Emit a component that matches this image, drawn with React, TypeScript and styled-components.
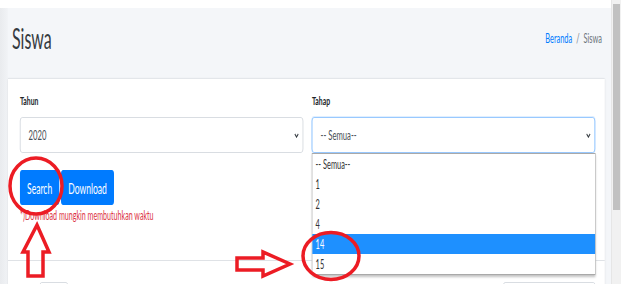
import React from "react";
import styled, { createGlobalStyle } from "styled-components";

// the reference is a squeezed screenshot: the page is laid out at its
// natural width and compressed horizontally by this factor
const SQUEEZE = 0.57;
const w = (refPx: number) => `${(refPx / SQUEEZE).toFixed(1)}px`;

const tahapOptions = ["-- Semua--", "1", "2", "4", "14", "15"];

const GlobalStyle = createGlobalStyle`
  html, body {
    margin: 0;
    padding: 0;
    background: #ffffff;
  }
  body {
    font-family: Lato, "Liberation Sans", sans-serif;
    color: #212529;
  }
`;

const App: React.FC = () => {
  return (
    <Screen>
      <GlobalStyle />
      <Viewport>
        <Frame>
          <TopGap />
          <Body>
            <Shade />
            <Main>
              <ContentHeader>
                <PageTitle>Siswa</PageTitle>
                <Breadcrumb>
                  <Crumb $link>Beranda</Crumb>
                  <Slash>/</Slash>
                  <Crumb>Siswa</Crumb>
                </Breadcrumb>
              </ContentHeader>

              <Card>
                <CardBody>
                  <FormRow>
                    <Field>
                      <Label>Tahun</Label>
                      <SelectBox>
                        <SelectText>2020</SelectText>
                        <Chevron viewBox="0 0 8 5">
                          <path d="M1 1 L4 4 L7 1" />
                        </Chevron>
                      </SelectBox>
                    </Field>
                    <Field>
                      <Label>Tahap</Label>
                      <SelectBox $focused>
                        <SelectText>-- Semua--</SelectText>
                        <Chevron viewBox="0 0 8 5">
                          <path d="M1 1 L4 4 L7 1" />
                        </Chevron>
                        <DropdownList>
                          {tahapOptions.map((opt) => (
                            <OptionItem key={opt} $selected={opt === "14"}>
                              {opt}
                            </OptionItem>
                          ))}
                        </DropdownList>
                      </SelectBox>
                    </Field>
                  </FormRow>

                  <ButtonRow>
                    <Button>Search</Button>
                    <Button>Download</Button>
                  </ButtonRow>
                  <Hint>*)Download mungkin membutuhkan waktu</Hint>
                </CardBody>

                {/* table controls, only their top edge is in view */}
                <TableTools>
                  <SmallBox $width={28} />
                  <SmallBox $width={92} />
                </TableTools>
              </Card>
            </Main>
          </Body>
        </Frame>
      </Viewport>

      <Scrollbar>
        <Track>
          <Thumb />
        </Track>
        <ScrollEdge />
      </Scrollbar>

      <Annotations viewBox="0 0 629 284">
        <ellipse cx="36" cy="186" rx="26" ry="28" />
        <polygon points="37,225 49,252 43,252 43,276 28,276 28,252 23,252" />
        <polygon points="237,258 263,258 263,252 290,264 263,276 263,270 237,270" />
        <ellipse cx="331" cy="256" rx="28" ry="23.5" />
      </Annotations>
    </Screen>
  );
};

export default App;

const Screen = styled.div`
  position: relative;
  width: 629px;
  height: 284px;
  overflow: hidden;
  display: flex;
`;

const Viewport = styled.div`
  width: 611px;
  height: 284px;
  overflow: hidden;
  flex: none;
`;

const Frame = styled.div`
  width: ${w(611)};
  height: 284px;
  transform: scaleX(${SQUEEZE});
  transform-origin: 0 0;
  display: flex;
  flex-direction: column;
`;

const TopGap = styled.div`
  height: 8px;
  background: #ffffff;
  flex: none;
`;

const Body = styled.div`
  flex: 1;
  display: flex;
`;

const Shade = styled.div`
  width: ${w(8)};
  flex: none;
  background: linear-gradient(to right, #e9ebee, #f1f3f6);
`;

const Main = styled.div`
  flex: 1;
  background: #f4f6f9;
  display: flex;
  flex-direction: column;
`;

const ContentHeader = styled.div`
  height: 70px;
  box-sizing: border-box;
  padding: 16px ${w(9)} 0 ${w(4)};
  display: flex;
  align-items: flex-start;
  justify-content: space-between;
`;

const PageTitle = styled.h1`
  margin: 0;
  font-size: 28px;
  line-height: 28px;
  font-weight: 400;
  color: #343a40;
`;

const Breadcrumb = styled.div`
  display: flex;
  align-items: center;
  font-size: 13px;
  line-height: 28px;
`;

const Crumb = styled.span<{ $link?: boolean }>`
  color: ${(p) => (p.$link ? "#007bff" : "#6c757d")};
`;

const Slash = styled.span`
  color: #6c757d;
  padding: 0 ${w(4)};
`;

const Card = styled.div`
  margin-right: ${w(6)};
  background: #ffffff;
  border-top: 1px solid #e3e6ea;
  box-shadow: 0 1px 3px rgba(0, 0, 0, 0.15);
  flex: 1;
`;

const CardBody = styled.div`
  padding: 15px ${w(10)} 37px ${w(12)};
  border-bottom: 1px solid #dfe2e6;
`;

const FormRow = styled.div`
  display: grid;
  grid-template-columns: 1fr 1fr;
  column-gap: ${w(9)};
`;

const Field = styled.div`
  display: flex;
  flex-direction: column;
`;

const Label = styled.label`
  font-size: 12px;
  line-height: 14px;
  font-weight: 700;
  color: #212529;
  margin-bottom: 9px;
`;

const SelectBox = styled.div<{ $focused?: boolean }>`
  position: relative;
  height: 36px;
  box-sizing: border-box;
  border: 1px solid ${(p) => (p.$focused ? "#80bdff" : "#ced4da")};
  border-radius: 4px;
  box-shadow: ${(p) => (p.$focused ? "0 0 0 1px rgba(0, 123, 255, 0.12)" : "none")};
  padding: 0 ${w(3)} 0 ${w(8)};
  display: flex;
  align-items: center;
  justify-content: space-between;
  background: #ffffff;
`;

const SelectText = styled.span`
  font-size: 13.5px;
  color: #495057;
`;

const Chevron = styled.svg`
  width: ${w(6)};
  height: 5px;
  fill: none;
  stroke: #343a40;
  stroke-width: 1.6;
`;

const DropdownList = styled.div`
  position: absolute;
  top: 100%;
  left: -1px;
  right: -2px;
  margin-top: 1px;
  background: #ffffff;
  border: 1px solid #a9a9a9;
  box-shadow: 1px 2px 3px rgba(0, 0, 0, 0.25);
  z-index: 5;
`;

const OptionItem = styled.div<{ $selected?: boolean }>`
  height: 20px;
  line-height: 20px;
  padding-left: ${w(3)};
  font-size: 13px;
  color: ${(p) => (p.$selected ? "#ffffff" : "#333333")};
  background: ${(p) => (p.$selected ? "#1e90ff" : "transparent")};
`;

const ButtonRow = styled.div`
  display: flex;
  gap: ${w(2)};
  margin-top: 17px;
`;

const Button = styled.button`
  height: 35px;
  padding: 0 ${w(7)};
  border: none;
  border-radius: 4px;
  background: #007bff;
  color: #ffffff;
  font-family: Lato, "Liberation Sans", sans-serif;
  font-size: 15px;
`;

const Hint = styled.div`
  margin-top: 3px;
  font-size: 12.5px;
  line-height: 15px;
  color: #dc3545;
`;

const TableTools = styled.div`
  padding: 21px ${w(10)} 0 ${w(32)};
  display: flex;
  justify-content: space-between;
`;

const SmallBox = styled.span<{ $width: number }>`
  display: inline-block;
  width: ${(p) => w(p.$width)};
  height: 30px;
  box-sizing: border-box;
  border: 1px solid #ced4da;
  border-radius: 3px;
`;

const Scrollbar = styled.div`
  flex: 1;
  display: flex;
`;

const Track = styled.div`
  width: 10px;
  background: #f1f1f1;
  border-left: 1px solid #e6e6e6;
  box-sizing: border-box;
  padding: 4px 1px 0;
`;

const Thumb = styled.div`
  height: 206px;
  background: #c1c1c1;
`;

const ScrollEdge = styled.div`
  flex: 1;
  background: #ffffff;
`;

const Annotations = styled.svg`
  position: absolute;
  inset: 0;
  width: 629px;
  height: 284px;
  pointer-events: none;
  fill: none;
  stroke: #ec1c24;
  stroke-width: 3.5;
  stroke-linejoin: miter;
`;
